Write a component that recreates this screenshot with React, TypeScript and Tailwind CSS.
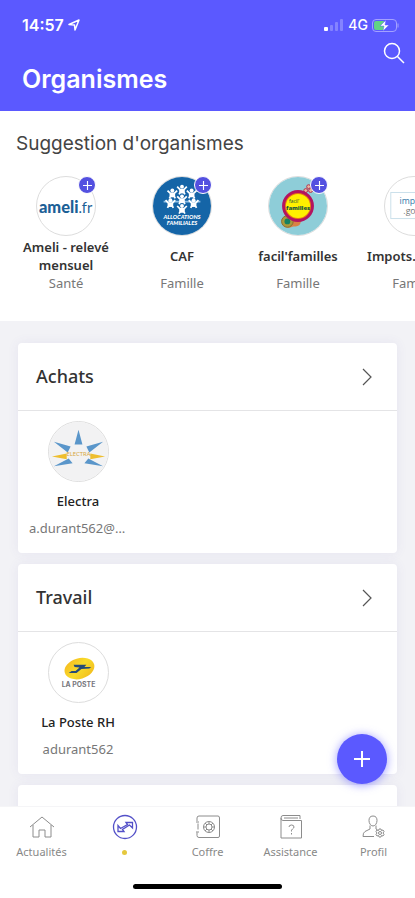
import React from 'react';

interface Organisme {
  name: string;
  detail: string;
  logo: React.ReactNode;
}

interface Category {
  title: string;
  items: Organisme[];
}

const Plus: React.FC<{ className?: string }> = ({ className }) => (
  <svg className={className} viewBox="0 0 16 16" fill="none" stroke="currentColor" aria-hidden="true">
    <path d="M8 0v16M0 8h16" />
  </svg>
);

/* Logos */
const AmeliLogo = () => (
  <svg viewBox="0 0 60 60" className="w-full h-full" aria-hidden="true">
    <text x="2" y="37" fill="#1b6096" fontFamily="Lato, sans-serif">
      <tspan fontSize="17" fontWeight="900">ameli</tspan>
      <tspan fontSize="15">.fr</tspan>
    </text>
  </svg>
);

const people = [
  [30, 11], [20, 15], [40, 15], [30, 21], [18, 25], [42, 25], [30, 31],
];

const CafLogo = () => (
  <svg viewBox="0 0 60 60" className="w-full h-full" aria-hidden="true">
    <circle cx="30" cy="30" r="30" fill="#1565a7" />
    <path d="M11 25.500h38" stroke="#8fc0e6" strokeWidth="2" />
    {people.map(([x, y]) => (
      <g key={`${x}-${y}`} stroke="#fff" fill="#fff">
        <circle cx={x} cy={y - 1} r="2" stroke="none" />
        <path d={`M${x - 5} ${y - 1}l3 3h4l3 -3M${x - 2} ${y + 2}v3l-1 2M${x + 2} ${y + 2}v3l1 2`} fill="none" strokeWidth="1.800" />
        <path d={`M${x - 2} ${y + 2}h4v4h-4z`} stroke="none" />
      </g>
    ))}
    <g fontFamily="Lato, sans-serif" fontSize="6" fontWeight="900" fontStyle="italic" fill="#fff" textAnchor="middle">
      <text x="30" y="43">ALLOCATIONS</text>
      <text x="30" y="50">FAMILIALES</text>
    </g>
  </svg>
);

const FacilLogo = () => (
  <svg viewBox="0 0 60 60" className="w-full h-full" aria-hidden="true">
    <circle cx="30" cy="30" r="30" fill="#8ecdd8" />
    <g fill="#e8b8a0" stroke="#b5304c">
      <circle cx="38" cy="14" r="2" />
      <circle cx="43" cy="14" r="2" />
      <circle cx="41" cy="10" r="2" />
    </g>
    <path d="M13 44c5-4 18-2 20 2-1 7-7 4-10 6-6 2-10-3-10-8z" fill="#d98245" />
    <circle cx="19" cy="46" r="6" fill="#a99a3b" stroke="#8b6b32" />
    <circle cx="19" cy="46" r="3" fill="#168061" />
    <circle cx="30" cy="30" r="15" fill="#e87716" stroke="#b31460" strokeWidth="3" />
    <circle cx="30" cy="30" r="12.500" fill="#fff000" />
    <g fontFamily="Noto Sans, sans-serif" textAnchor="middle" fill="#15543f">
      <text x="26" y="27" fontSize="5">facil’</text>
      <text x="30" y="34" fontSize="6" fontWeight="900">familles</text>
    </g>
  </svg>
);

const ImpotsLogo = () => (
  <svg viewBox="0 0 60 60" className="w-full h-full" aria-hidden="true">
    <rect x="6" y="16" width="48" height="27" fill="#fff" stroke="#c9dfea" />
    <g fontFamily="Open Sans, sans-serif" fontSize="9">
      <text x="15" y="28" fill="#3477a8">impots</text>
      <text x="19" y="38" fill="#777">.gouv.fr</text>
    </g>
  </svg>
);

const ElectraLogo = () => (
  <svg viewBox="0 0 60 60" className="w-full h-full" aria-hidden="true">
    <circle cx="30" cy="30" r="30" fill="#f2f2f3" />
    <path
      d="M30 8l4 15h-8zM5 20l17 5-3 6zM55 20l-17 5 3 6zM5 45l15-8 4 5zM55 45l-15-8-4 5z"
      fill="#5a96ca"
    />
    <path d="M3 35l15-3v6zM57 35l-15-3v6z" fill="#eebe2e" />
    <text x="30" y="35" fontFamily="Noto Sans, sans-serif" fontSize="6" textAnchor="middle" fill="#d6a73c">ELECTRA</text>
  </svg>
);

const PosteLogo = () => (
  <svg viewBox="0 0 60 60" className="w-full h-full" aria-hidden="true">
    <defs>
      <linearGradient id="poste" x1="0" y1="0" x2="1" y2="1">
        <stop offset="0" stopColor="#f6b51d" />
        <stop offset="0.500" stopColor="#f8dc2b" />
        <stop offset="1" stopColor="#f1b51a" />
      </linearGradient>
    </defs>
    <ellipse cx="31" cy="26" rx="15.500" ry="10.500" transform="rotate(-16 31 26)" fill="url(#poste)" />
    <path d="M25 22h13l-2 2.500h7l-2 1.500-8 .500-5 4h-8l3-2h4l4-3.500-5-.500z" fill="#264b77" />
    <text x="30" y="45" fontFamily="Inter, sans-serif" fontSize="7" fontWeight="700" textAnchor="middle" fill="#77777c">LA POSTE</text>
  </svg>
);

const suggestions: Organisme[] = [
  { name: 'Ameli - relevé mensuel', detail: 'Santé', logo: <AmeliLogo /> },
  { name: 'CAF', detail: 'Famille', logo: <CafLogo /> },
  { name: "facil'familles", detail: 'Famille', logo: <FacilLogo /> },
  { name: 'Impots.gouv.fr', detail: 'Famille', logo: <ImpotsLogo /> },
];

const categories: Category[] = [
  { title: 'Achats', items: [{ name: 'Electra', detail: 'a.durant562@gmail.com', logo: <ElectraLogo /> }] },
  { title: 'Travail', items: [{ name: 'La Poste RH', detail: 'adurant562', logo: <PosteLogo /> }] },
];

const tabs = [
  {
    label: 'Actualités',
    icon: <path d="M2 14L14 4l12 10M5 12v12h6v-7h6v7h6V12" />,
  },
  {
    label: 'Organismes',
    active: true,
    icon: (
      <>
        <circle cx="14" cy="14" r="11.500" strokeWidth="1.300" />
        <path d="M21.500 9.500H15l1.500 2-7 4-2.500-3v6h6l-1.500-2 7-4.500 3 3z" strokeWidth="1.300" />
      </>
    ),
  },
  {
    label: 'Coffre',
    icon: (
      <>
        <path d="M3 8V5q0-2 2-2h19q1.500 0 1.500 2v18q0 1.500-1.500 1.500H5q-2 0-2-2v-3M4 10.500v6M2 9h3M2 19h3" />
        <circle cx="15" cy="14" r="5.500" />
        <circle cx="15" cy="14" r="3" />
        <path d="M15 8.500v2.500M15 17v2.500M9.500 14H12M18 14h2.500M11 10l2 2M19 10l-2 2M11 18l2-2M19 18l-2-2" />
      </>
    ),
  },
  {
    label: 'Assistance',
    icon: (
      <>
        <path d="M23 6V2.500H6q-2 0-2 2.500t2 2.500h18.500v17.500H4V5M7 5h14" />
        <path d="M12 14q0-2 2.500-2t2.500 2q0 1-1.500 2t-1 2.500M14.500 20v1.500" />
      </>
    ),
  },
  {
    label: 'Profil',
    icon: (
      <>
        <path d="M13 3c3 0 4 2 4 4.500s-1.500 5.500-4 5.500-4-3-4-5.500S10 3 13 3zM10 12.500V16l-5 2.500q-2 1-2 5h11M16 12.500V16l1.500 1" />
        <circle cx="20" cy="20" r="1.500" />
        <path d="M19 16h2l.500 1.500 1.500-.500 1 1.500-1 1.500 1 1.500-1 1.500-1.500-.500L21 24h-2l-.500-1.500-1.500.500-1-1.500 1-1.500-1-1.500 1-1.500 1.500.500z" />
      </>
    ),
  },
];

const StatusBar = () => (
  <div className="flex items-center justify-between h-5">
    <div className="flex items-center gap-1">
      <span className="text-base font-semibold">14:57</span>
      <svg viewBox="0 0 12 12" className="w-3 h-3" fill="none" stroke="currentColor" strokeWidth="1.500" strokeLinejoin="round" aria-hidden="true">
        <path d="M1 5.500L11 1 7 11 6.500 6z" />
      </svg>
    </div>
    <div className="flex items-center gap-1">
      <svg viewBox="0 0 20 12" className="w-5 h-3" fill="currentColor" aria-hidden="true">
        <rect x="0" y="8" width="4" height="4" rx="1" />
        <g opacity="0.250">
          <rect x="6" y="6" width="3" height="6" rx="1" />
          <rect x="11" y="3" width="3" height="9" rx="1" />
          <rect x="16" y="0" width="3" height="12" rx="1" />
        </g>
      </svg>
      <span className="text-sm font-medium">4G</span>
      <svg viewBox="0 0 27 13" className="w-[27px] h-[13px]" aria-hidden="true">
        <rect x="0.500" y="0.500" width="24" height="12" rx="3.500" fill="none" stroke="#a3a1ff" />
        <path d="M26 4.500v4" stroke="#a3a1ff" />
        <rect x="2" y="2" width="11" height="9" rx="2" fill="#61d384" />
        <path d="M14 1L8 7h4l-1 5 6-6h-4z" fill="#fff" stroke="#5b59ff" strokeWidth="0.500" />
      </svg>
    </div>
  </div>
);

const Header = () => (
  <header className="shrink-0 bg-[#5b59ff] text-white font-['Inter',sans-serif] pt-[15px] pb-4">
    <div className="pl-[22px] pr-4">
      <StatusBar />
    </div>
    <div className="flex justify-end pr-[10px] pt-[7px]">
      <button type="button" aria-label="Rechercher" className="block">
        <svg viewBox="0 0 22 22" className="w-[22px] h-[22px]" fill="none" stroke="currentColor" strokeWidth="1.500" aria-hidden="true">
          <circle cx="9" cy="9" r="7.500" />
          <path d="M14.500 14.500L21 21" />
        </svg>
      </button>
    </div>
    <h1 className="pl-[22px] text-[25px] leading-[31px] font-semibold">Organismes</h1>
  </header>
);

const Suggestions = () => (
  <section className="shrink-0 bg-white pt-[22px] pb-[29px] overflow-hidden">
    <h2 className="pl-4 text-[19px] leading-[22px] font-['Inter',sans-serif] text-[#444]">Suggestion d'organismes</h2>
    <ul className="flex pl-2 pt-[21px]">
      {suggestions.map((item) => (
        <li key={item.name} className="w-[116px] shrink-0 flex flex-col items-center text-center">
          <div className="relative w-[60px] h-[60px] rounded-full border border-[#ddd]">
            {item.logo}
            <button
              type="button"
              aria-label={`Ajouter ${item.name}`}
              className="absolute -top-px -right-px w-[18px] h-[18px] rounded-full border border-white bg-[#5350e0] text-white flex items-center justify-center"
            >
              <Plus className="w-[9px] h-[9px] stroke-2" />
            </button>
          </div>
          <h3 className="mt-0.5 w-[100px] h-9 flex items-center justify-center text-[13px] leading-[18px] font-semibold text-[#333]">
            {item.name}
          </h3>
          <p className="text-[13px] leading-[18px] text-[#777]">{item.detail}</p>
        </li>
      ))}
    </ul>
  </section>
);

const CategoryCard: React.FC<{ category: Category }> = ({ category }) => (
  <section className="shrink-0 bg-white rounded-sm shadow-[0_0_12px_rgba(90,80,160,0.08)]">
    <button type="button" className="w-full h-[68px] pl-[18px] pr-6 flex items-center justify-between border-b border-[#e4e4e6]">
      <span className="text-lg leading-[26px] pb-0.5 font-medium text-[#333]">{category.title}</span>
      <svg viewBox="0 0 12 18" className="w-3 h-[18px]" fill="none" stroke="#555" strokeWidth="1.200" aria-hidden="true">
        <path d="M2 1l8 8-8 8" />
      </svg>
    </button>
    <ul className="flex pt-[10px] pb-4">
      {category.items.map((item) => (
        <li key={item.name} className="w-[120px] flex flex-col items-center text-center">
          <div className="w-[61px] h-[61px] rounded-full border border-[#ddd]">{item.logo}</div>
          <h3 className="mt-[10px] text-[13px] leading-[18px] font-medium text-[#222]">{item.name}</h3>
          <p className="mt-[9px] w-[98px] truncate text-[13px] leading-[18px] text-[#777]">{item.detail}</p>
        </li>
      ))}
    </ul>
  </section>
);

const TabBar = () => (
  <nav className="shrink-0 bg-white border-t border-[#f5f5f7] pt-1.5 pb-[9px]">
    <ul className="grid grid-cols-5">
      {tabs.map((tab) => (
        <li key={tab.label}>
          <a href="#" aria-label={tab.label} aria-current={tab.active ? 'page' : undefined} className="flex flex-col items-center">
            <svg viewBox="0 0 28 28" className={tab.active ? 'w-7 h-7 text-[#5350c8]' : 'w-7 h-7 text-[#8c8c8c]'} fill="none" stroke="currentColor" aria-hidden="true">
              {tab.icon}
            </svg>
            <span className="h-[22px] flex items-center text-[11px] text-[#888]">
              {tab.active ? <span className="w-[5px] h-[5px] rounded-full bg-[#e5c83e]" /> : tab.label}
            </span>
          </a>
        </li>
      ))}
    </ul>
    <div className="mx-auto mt-[21px] w-[149px] h-[5px] rounded-full bg-black" />
  </nav>
);

const App: React.FC = () => {
  return (
    <div className="h-dvh flex flex-col bg-[#f2f2f6] font-['Noto_Sans','Open_Sans',sans-serif]">
      <Header />
      <main className="relative flex-1 min-h-0 flex flex-col">
        <Suggestions />
        <div className="flex-1 min-h-0 overflow-hidden px-[18px] pt-[22px] flex flex-col gap-[11px]">
          {categories.map((category) => (
            <CategoryCard key={category.title} category={category} />
          ))}
          {/* next card, still below the fold */}
          <section className="shrink-0 h-[210px] bg-white rounded-sm shadow-[0_0_12px_rgba(90,80,160,0.08)]" />
        </div>
        <button
          type="button"
          aria-label="Ajouter un organisme"
          className="absolute right-7 bottom-[22px] w-[50px] h-[50px] rounded-full bg-[#5b59ff] text-white flex items-center justify-center shadow-[0_1px_10px_rgba(91,89,255,0.6)]"
        >
          <Plus className="w-4 h-4 stroke-2" />
        </button>
      </main>
      <TabBar />
    </div>
  );
};

export default App;
